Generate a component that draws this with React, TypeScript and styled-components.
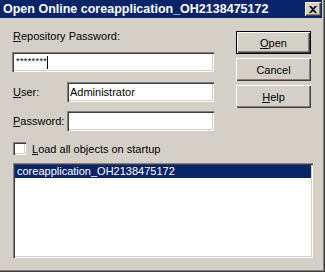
import React from "react";
import styled, { createGlobalStyle } from "styled-components";

const GlobalStyle = createGlobalStyle`
  html, body {
    margin: 0;
    padding: 0;
    background: #d4d0c8;
  }
  * {
    box-sizing: border-box;
  }
`;

const face = "#d4d0c8";
const shadow = "#808080";
const darkShadow = "#404040";
const selection = "#0a246a";

const Window = styled.div`
  width: 325px;
  height: 272px;
  background: ${face};
  padding: 0 3px 3px 0;
  box-shadow: inset -1px -1px ${darkShadow}, inset -2px -2px ${shadow};
  display: flex;
  flex-direction: column;
  font-family: "Liberation Sans", Arial, sans-serif;
  font-size: 11px;
  color: #000;
`;

const TitleBar = styled.div`
  height: 18px;
  background: ${selection};
  display: flex;
  align-items: center;
  justify-content: space-between;
  padding: 0 1px 0 3px;
`;

const Title = styled.span`
  color: #fff;
  font-weight: bold;
  font-size: 12.5px;
  white-space: nowrap;
`;

const CloseButton = styled.div`
  width: 16px;
  height: 14px;
  background: ${face};
  box-shadow: inset 1px 1px #fff, inset -1px -1px ${darkShadow},
    inset -2px -2px ${shadow};
  display: flex;
  align-items: center;
  justify-content: center;
`;

const Body = styled.div`
  display: flex;
  flex-direction: column;
  padding-left: 12px;
`;

const TopSection = styled.div`
  display: flex;
  align-items: flex-start;
`;

const Fields = styled.div`
  width: 202px;
  display: flex;
  flex-direction: column;
`;

const Label = styled.div<{ $top?: number }>`
  padding-left: 1px;
  margin-top: ${(p) => p.$top ?? 0}px;
  line-height: 13px;
  white-space: nowrap;
`;

const Field = styled.div<{ $top?: number }>`
  display: flex;
  align-items: center;
  margin-top: ${(p) => p.$top ?? 0}px;
`;

const FieldLabel = styled.label`
  width: 55px;
  padding-left: 1px;
  line-height: 13px;
`;

const Edit = styled.div`
  flex: 1;
  height: 20px;
  background: #fff;
  box-shadow: inset 1px 1px ${shadow}, inset 2px 2px ${darkShadow},
    inset -1px -1px #fff, inset -2px -2px ${face};
  display: flex;
  align-items: center;
  padding: 0 3px;
  white-space: nowrap;
`;

const Masked = styled.span`
  font-size: 9px;
  letter-spacing: 0.4px;
  margin-top: -2px;
  padding-left: 1px;
`;

const Caret = styled.span`
  width: 1px;
  height: 13px;
  background: #000;
`;

const Buttons = styled.div`
  margin: 13px 0 0 22px;
  display: flex;
  flex-direction: column;
  gap: 4px;
`;

const Button = styled.div<{ $default?: boolean }>`
  width: 75px;
  height: 23px;
  display: flex;
  align-items: center;
  justify-content: center;
  background: ${face};
  border: ${(p) => (p.$default ? "1px solid #000" : "none")};
  box-shadow: inset 1px 1px #fff, inset -1px -1px ${darkShadow},
    inset -2px -2px ${shadow};
  font-size: 11px;
`;

const CheckRow = styled.div`
  display: flex;
  align-items: center;
  margin: 11px 0 0 1px;
  height: 13px;
`;

const CheckBox = styled.span`
  width: 13px;
  height: 13px;
  background: #fff;
  box-shadow: inset 1px 1px ${shadow}, inset 2px 2px ${darkShadow},
    inset -1px -1px #fff, inset -2px -2px ${face};
  margin-right: 6px;
`;

const ListBox = styled.div`
  margin: 8px 0 0 1px;
  width: 300px;
  height: 95px;
  background: #fff;
  box-shadow: inset 1px 1px ${shadow}, inset 2px 2px ${darkShadow},
    inset -1px -1px #fff, inset -2px -2px ${face};
  padding: 2px;
`;

const ListItem = styled.div<{ $selected?: boolean }>`
  height: 13px;
  line-height: 13px;
  padding-left: 2px;
  background: ${(p) => (p.$selected ? selection : "transparent")};
  color: ${(p) => (p.$selected ? "#fff" : "#000")};
`;

const CloseGlyph = () => (
  <svg width="8" height="7" viewBox="0 0 8 7">
    <path d="M0 0h2l2 2 2-2h2L5 3.5 8 7H6L4 5 2 7H0l3-3.5z" fill="#000" />
  </svg>
);

export default function App() {
  return (
    <>
      <GlobalStyle />
      <Window>
        <TitleBar>
          <Title>Open Online coreapplication_OH2138475172</Title>
          <CloseButton>
            <CloseGlyph />
          </CloseButton>
        </TitleBar>
        <Body>
          <TopSection>
            <Fields>
              <Label $top={12}>
                <u>R</u>epository Password:
              </Label>
              <Field $top={9}>
                <Edit>
                  <Masked>********</Masked>
                  <Caret />
                </Edit>
              </Field>
              <Field $top={10}>
                <FieldLabel>
                  <u>U</u>ser:
                </FieldLabel>
                <Edit>Administrator</Edit>
              </Field>
              <Field $top={9}>
                <FieldLabel>
                  <u>P</u>assword:
                </FieldLabel>
                <Edit />
              </Field>
            </Fields>
            <Buttons>
              <Button $default>
                <span>
                  <u>O</u>pen
                </span>
              </Button>
              <Button>Cancel</Button>
              <Button>
                <span>
                  <u>H</u>elp
                </span>
              </Button>
            </Buttons>
          </TopSection>
          <CheckRow>
            <CheckBox />
            <span>
              <u>L</u>oad all objects on startup
            </span>
          </CheckRow>
          <ListBox>
            <ListItem $selected>coreapplication_OH2138475172</ListItem>
          </ListBox>
        </Body>
      </Window>
    </>
  );
}
